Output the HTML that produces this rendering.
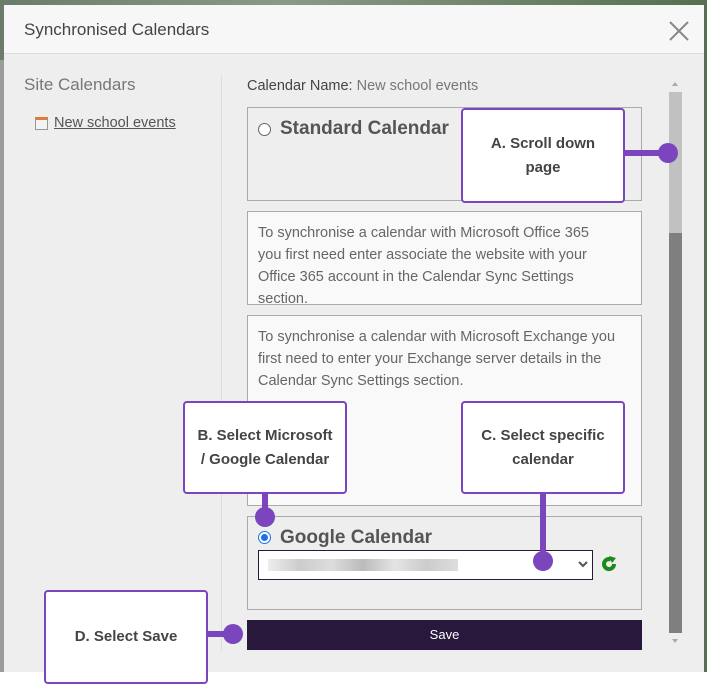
<!DOCTYPE html><html><head><style>
*{box-sizing:border-box;margin:0;padding:0}
body{width:707px;height:686px;position:relative;overflow:hidden;background:#fff;font-family:"Liberation Sans",sans-serif;color:#555}
.a{position:absolute}
.box{position:absolute;left:247px;width:395px;border:1px solid #aaa}
.txt{font-size:14.5px;line-height:22px;color:#666;padding:10px 10px;white-space:nowrap}
.call{position:absolute;background:#fff;border:2px solid #7b45bd;border-radius:4px;font-weight:bold;font-size:15px;color:#444;text-align:center;line-height:24px;display:flex;align-items:center;justify-content:center}
.dot{position:absolute;width:20px;height:20px;border-radius:50%;background:#7b45bd}
.ln{position:absolute;background:#7b45bd}
</style></head><body>
<div class="a" style="left:0;top:0;width:707px;height:672px;background:linear-gradient(90deg,#6b7d6a,#8a9a86 40%,#55704f)"></div>
<div class="a" style="left:0;top:60px;width:4px;height:612px;background:#9c9c9c"></div>
<div class="a" style="left:4px;top:5px;width:700px;height:667px;background:#eee"></div>
<div class="a" style="left:4px;top:5px;width:700px;height:49px;background:#f7f7f7;border-bottom:1px solid #ddd"></div>
<div class="a" style="left:24px;top:20px;font-size:17px;color:#444">Synchronised Calendars</div>
<svg class="a" style="left:668px;top:20px" width="22" height="22"><path d="M2 2L20 20M20 2L2 20" stroke="#888" stroke-width="2"/></svg>
<div class="a" style="left:24px;top:75px;font-size:17px;color:#777">Site Calendars</div>
<div class="a" style="left:35px;top:117px;width:13px;height:13px;background:#f3f3f3;border:1px solid #999;border-top:3px solid #e07a3a"></div>
<div class="a" style="left:54px;top:115px;font-size:14.5px;color:#555;text-decoration:underline">New school events</div>
<div class="a" style="left:221px;top:75px;width:1px;height:576px;background:#ddd"></div>
<div class="a" style="left:247px;top:78px;font-size:14.5px;color:#555"><span style="color:#444">Calendar Name:</span> <span style="color:#777">New school events</span></div>
<div class="box" style="top:107px;height:94px;background:#eee"></div>
<div class="a" style="left:258px;top:123px;width:13px;height:13px;border:1px solid #666;border-radius:50%;background:#fff"></div>
<div class="a" style="left:280px;top:118px;font-size:19px;font-weight:bold;color:#555">Standard Calendar</div>
<div class="box txt" style="top:211px;height:94px;background:#f9f9f9;overflow:hidden">To synchronise a calendar with Microsoft Office 365<br>you first need enter associate the website with your<br>Office 365 account in the Calendar Sync Settings<br>section.</div>
<div class="box txt" style="top:315px;height:191px;background:#f9f9f9">To synchronise a calendar with Microsoft Exchange you<br>first need to enter your Exchange server details in the<br>Calendar Sync Settings section.</div>
<div class="box" style="top:516px;height:94px;background:#eee"></div>
<div class="a" style="left:258px;top:531px;width:13px;height:13px;border:1px solid #1a73e8;border-radius:50%;background:#fff"></div>
<div class="a" style="left:261px;top:534px;width:7px;height:7px;border-radius:50%;background:#1a73e8"></div>
<div class="a" style="left:280px;top:527px;font-size:19px;font-weight:bold;color:#555">Google Calendar</div>
<div class="a" style="left:258px;top:550px;width:335px;height:30px;background:#fff;border:1px solid #28183b"></div>
<div class="a" style="left:268px;top:559px;width:190px;height:12px;background:linear-gradient(90deg,#eee,#ccc,#ddd,#bbb,#e4e4e4,#ccc,#ddd)"></div>
<svg class="a" style="left:578px;top:560px" width="10" height="8"><path d="M1 2L5 6L9 2" stroke="#555" stroke-width="2" fill="none"/></svg>
<svg class="a" style="left:600px;top:555px" width="18" height="18"><path d="M14 9A5 5 0 1 1 11 4.5" stroke="#1a8a1a" stroke-width="4" fill="none"/><path d="M9 1L16 3L12 8Z" fill="#1a8a1a"/></svg>
<div class="a" style="left:247px;top:620px;width:395px;height:30px;background:#28183b;color:#fff;font-size:13px;text-align:center;line-height:30px">Save</div>
<div class="a" style="left:669px;top:77px;width:13px;height:570px;background:#eee"></div>
<div class="a" style="left:669px;top:92px;width:13px;height:141px;background:#c1c1c1"></div>
<div class="a" style="left:669px;top:233px;width:13px;height:400px;background:#7f7f7f"></div>
<div class="a" style="left:672px;top:82px;border:3px solid transparent;border-bottom:4px solid #aaa;border-top:0"></div>
<div class="a" style="left:672px;top:639px;border:3px solid transparent;border-top:4px solid #aaa;border-bottom:0"></div>
<div class="ln" style="left:622px;top:150px;width:46px;height:6px"></div><div class="dot" style="left:658px;top:143px"></div>
<div class="ln" style="left:262px;top:492px;width:6px;height:25px"></div><div class="dot" style="left:255px;top:507px"></div>
<div class="ln" style="left:540px;top:492px;width:6px;height:68px"></div><div class="dot" style="left:533px;top:551px"></div>
<div class="ln" style="left:205px;top:631px;width:28px;height:6px"></div><div class="dot" style="left:223px;top:624px"></div>
<div class="call" style="left:461px;top:108px;width:164px;height:95px">A. Scroll down<br>page</div>
<div class="call" style="left:183px;top:401px;width:164px;height:93px">B. Select Microsoft<br>/ Google Calendar</div>
<div class="call" style="left:461px;top:401px;width:164px;height:93px">C. Select specific<br>calendar</div>
<div class="call" style="left:44px;top:590px;width:164px;height:94px">D. Select Save</div>
</body></html>
